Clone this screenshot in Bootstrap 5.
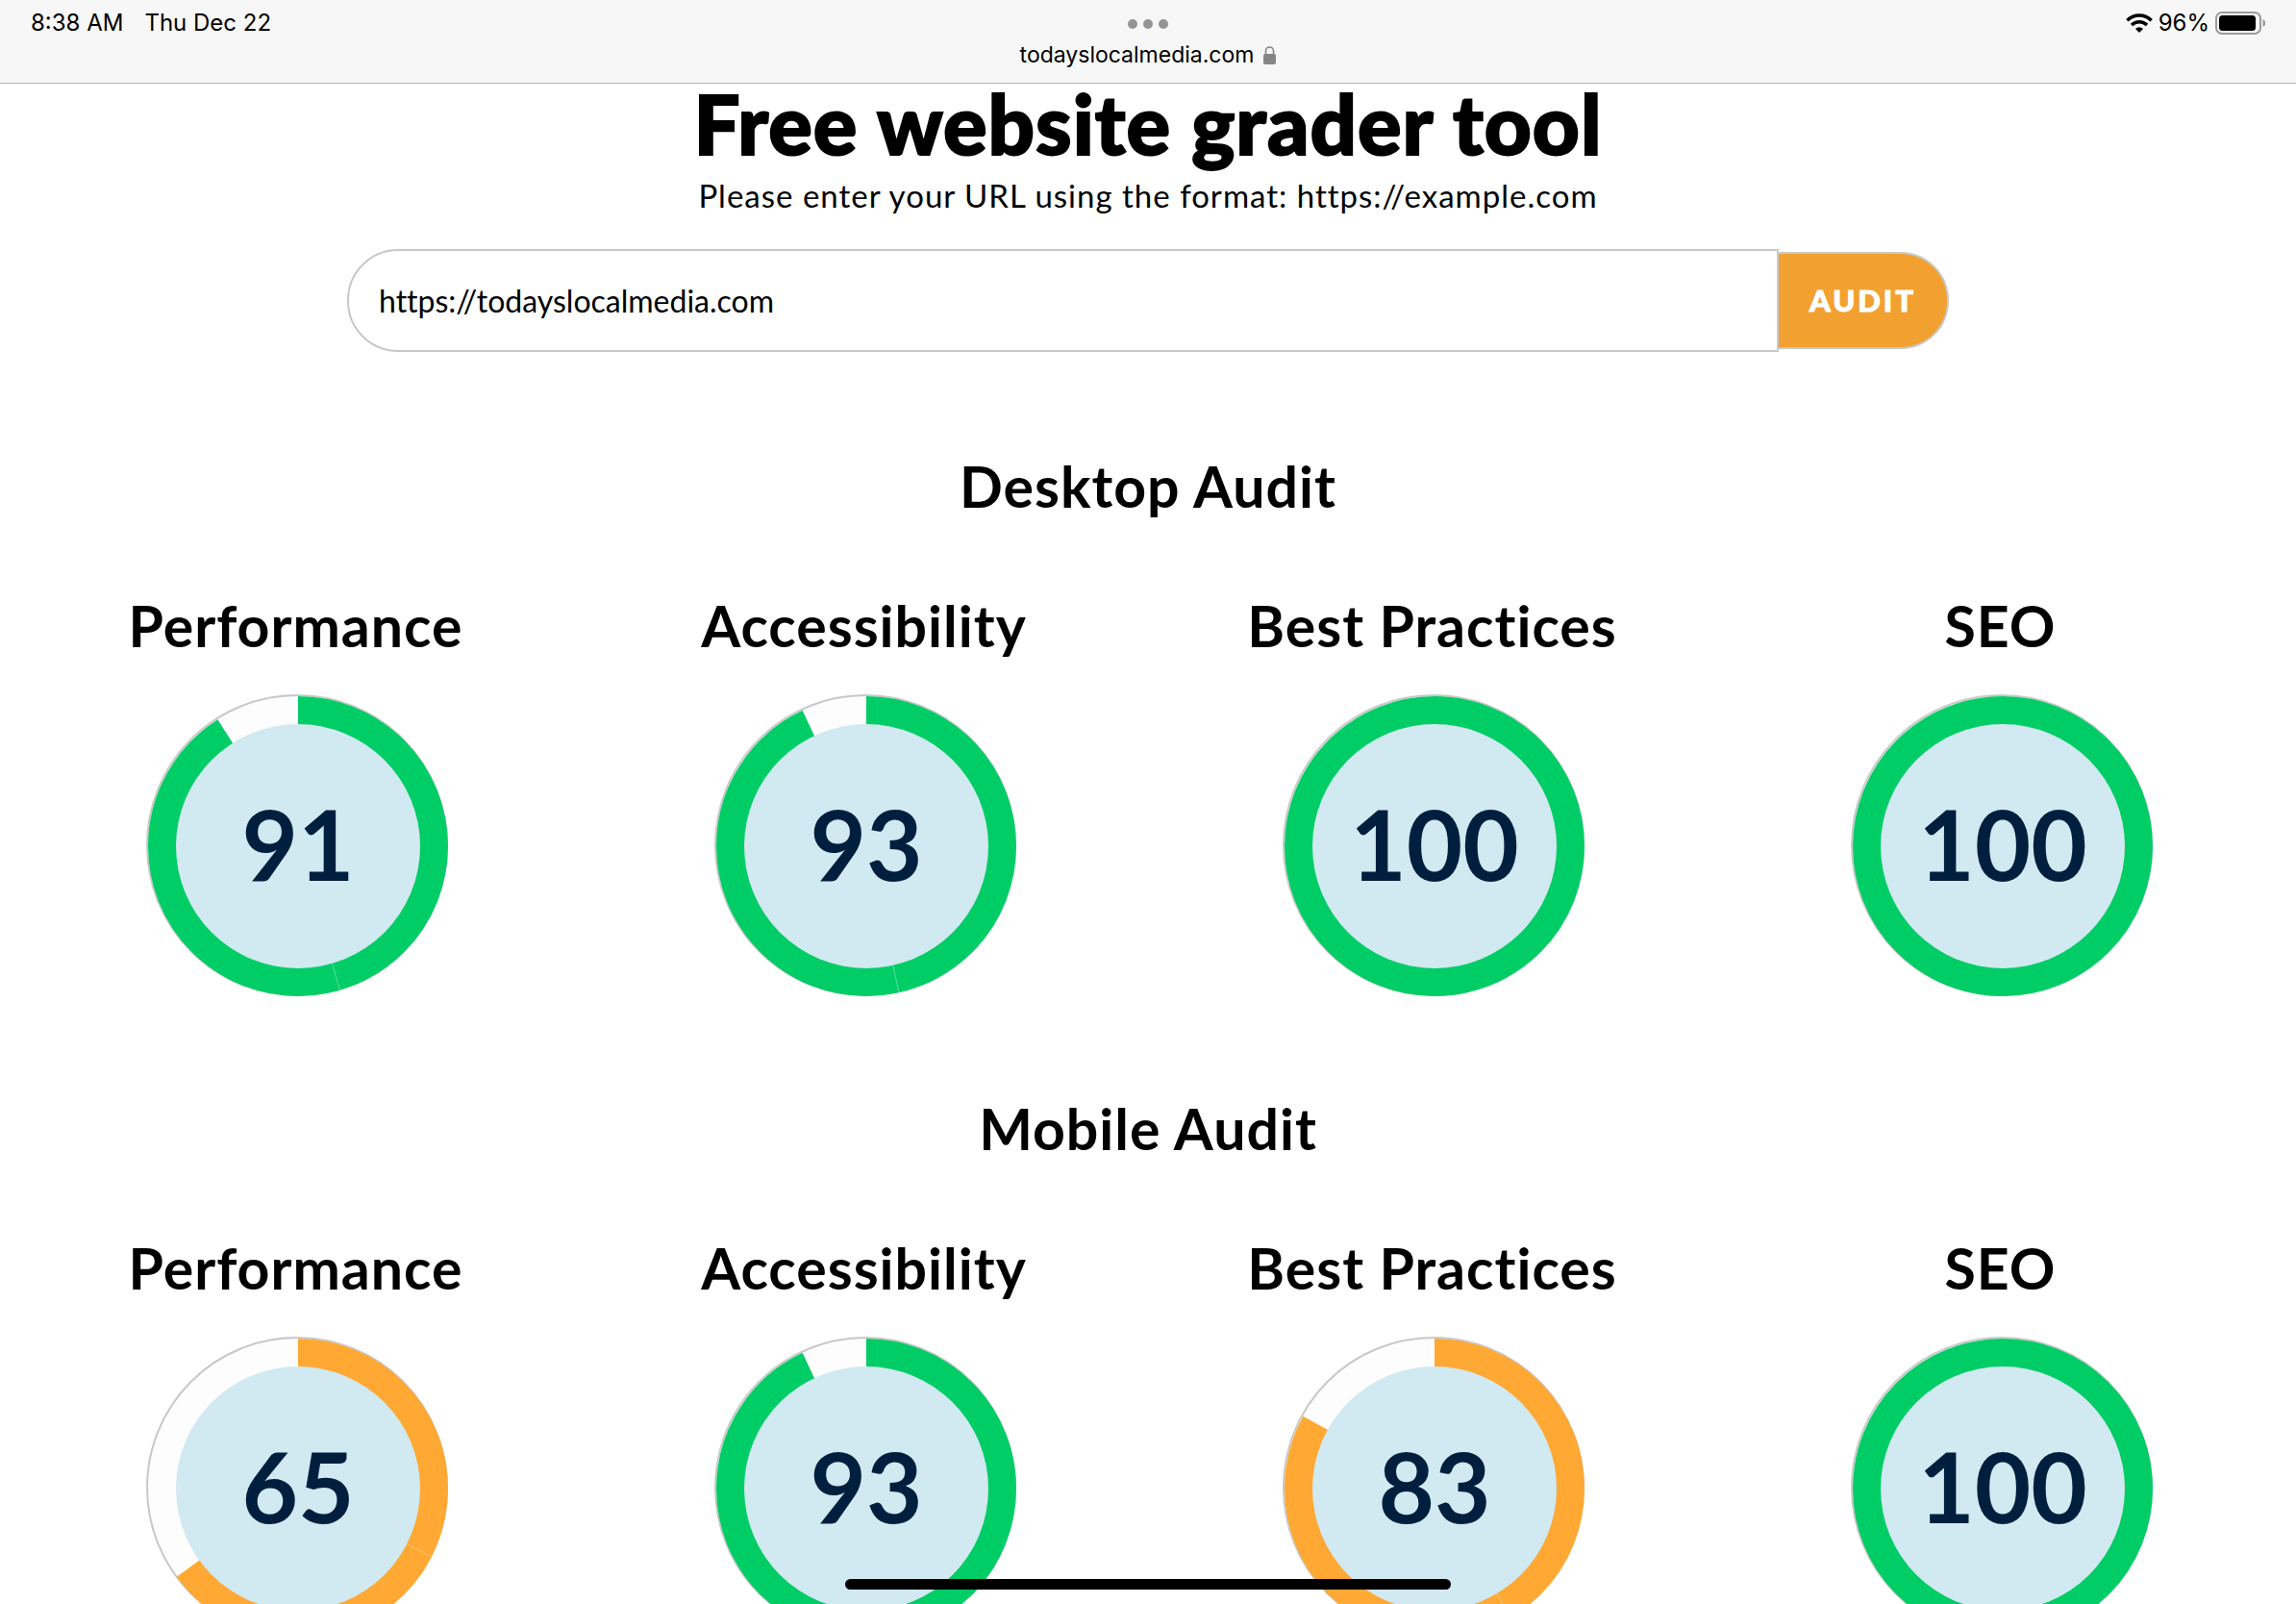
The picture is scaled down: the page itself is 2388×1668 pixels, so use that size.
<!DOCTYPE html>
<html lang="en">
<head>
<meta charset="utf-8">
<meta name="viewport" content="width=device-width, initial-scale=1">
<title>Free website grader tool</title>
<link rel="stylesheet" href="https://cdn.jsdelivr.net/npm/bootstrap@5.3.0/dist/css/bootstrap.min.css">
<style>
  html { scrollbar-width: none; }
  body { font-family: Lato, "Open Sans", sans-serif; color: #000; background: #fff; }
  h1, h2, h3, p { margin: 0; }
  .browser-bar { background: #f7f7f7; border-bottom: 1px solid #b0b0b0; font-family: Inter, Roboto, sans-serif; font-size: 24px; line-height: 28px; padding: 10px 32px 0; height: 87px; }
  .bar-side { flex: 1 1 0; }
  .bar-left { gap: 22px; }
  .bar-right { gap: 6px; }
  .bar-side svg, .site-url svg { display: block; }
  .dots { height: 30px; }
  .dots svg { display: block; }
  .site-url { color: #000; gap: 10px; font-size: 23px; line-height: 34px; }
  .page-title { font-size: 85px; line-height: 82px; font-weight: 900; letter-spacing: 1px; -webkit-text-stroke: 2px #000; }
  .hint { font-size: 33px; line-height: 40px; letter-spacing: 1px; margin-top: 14px; }
  .grader { max-width: 1666px; margin-top: 36px; }
  .url-box { height: 107px; border: 2px solid #c8c8c8; border-radius: 53px 0 0 53px; font-size: 32px; padding: 0 31px; color: #000; font-variant-ligatures: none; }
  .url-box:focus { box-shadow: none; }
  .audit-btn { height: 101px; border: 2px solid #c8c8c8; border-left: 0; border-radius: 0 50px 50px 0; background: #f2a130; color: #fff; font-size: 31px; font-weight: 900; letter-spacing: 3px; padding: 0 32px; -webkit-text-stroke: 1px #fff; }
  .report { padding: 0 12px; }
  .report-desktop { margin-top: 104px; }
  .report-mobile { margin-top: 100px; }
  .report-title, .metric { font-size: 59px; line-height: 72px; font-weight: 700; letter-spacing: 1px; }
  .report-title { margin-bottom: 73px; }
  .metric { margin-bottom: 35px; }
  .gauge { display: block; margin: 0 auto; width: 320px; height: 316px; }
  .rim { fill: #fdfdfd; stroke: #c8c8c8; stroke-width: 2; }
  .ring { fill: none; stroke-width: 30; stroke: #00cd66; }
  .fair .ring { stroke: #ffa833; }
  .core { fill: #d1e9f1; }
  .seam { stroke: #fff; stroke-opacity: .35; stroke-width: 1; }
  .score { font-size: 101px; font-weight: 700; fill: #001f3e; text-anchor: middle; }
  .home-bar { width: 630px; height: 11px; margin-bottom: 15px; background: #000; z-index: 1030; }
</style>
<script src="https://cdn.jsdelivr.net/npm/bootstrap@5.3.0/dist/js/bootstrap.bundle.min.js"></script>
</head>
<body>
<header class="browser-bar sticky-top d-flex align-items-start">
  <div class="bar-side bar-left d-flex"><span>8:38 AM</span><span>Thu Dec 22</span></div>
  <div class="d-flex flex-column align-items-center">
    <div class="dots"><svg width="42" height="30"><g fill="#949494"><circle cx="5" cy="15" r="5"/><circle cx="21" cy="15" r="5"/><circle cx="37" cy="15" r="5"/></g></svg></div>
    <a class="site-url d-flex align-items-center text-decoration-none" href="#">todayslocalmedia.com
      <svg width="13" height="19" viewBox="0 0 13 19"><rect y="8" width="13" height="11" rx="2" fill="#868686"/><path d="M2.500 9V5a4 4 0 0 1 8 0v4" fill="none" stroke="#868686" stroke-width="1.600"/></svg></a>
  </div>
  <div class="bar-side bar-right d-flex justify-content-end align-items-center">
    <svg width="28" height="20" viewBox="0 0 28 20"><g fill="none" stroke="#000" stroke-width="3.400"><path d="M1.300 7.200a18 18 0 0 1 25.400 0"/><path d="M6 12a11.300 11.300 0 0 1 16 0"/></g><path d="M14 20l-4-4a5.700 5.700 0 0 1 8 0z"/></svg>
    <span>96%</span>
    <svg width="52" height="24" viewBox="0 0 52 24"><rect x="1" y="1" width="46" height="22" rx="6" fill="none" stroke="#9b9b9b" stroke-width="2"/><rect x="4" y="4" width="38" height="16" rx="3.500"/><path d="M49.500 8q3 1.500 3 4t-3 4z" fill="#9b9b9b"/></svg>
  </div>
</header>

<main>
  <h1 class="page-title text-center">Free website grader tool</h1>
  <p class="hint text-center"><label for="site">Please enter your URL using the format: https://example.com</label></p>
  <form class="grader d-flex align-items-center mx-auto">
    <input id="site" class="url-box form-control" type="text" value="https://todayslocalmedia.com">
    <button class="audit-btn" type="button">AUDIT</button>
  </form>

  <section class="report report-desktop">
    <h2 class="report-title text-center">Desktop Audit</h2>
    <div class="row g-0 text-center">
      <div class="col-3"><h3 class="metric">Performance</h3>
        <svg class="gauge" viewBox="0 0 320 316"><circle class="rim" cx="161" cy="157" r="156"/><circle class="ring" cx="162" cy="158" r="141" pathLength="100" stroke-dasharray="91 100" transform="rotate(-90 162 158)"/><path class="seam" d="M162 31V2" transform="rotate(163.800 162 158)"/><circle class="core" cx="162" cy="158" r="127"/><text class="score" x="162" y="194">91</text></svg></div>
      <div class="col-3"><h3 class="metric">Accessibility</h3>
        <svg class="gauge" viewBox="0 0 320 316"><circle class="rim" cx="161" cy="157" r="156"/><circle class="ring" cx="162" cy="158" r="141" pathLength="100" stroke-dasharray="93 100" transform="rotate(-90 162 158)"/><path class="seam" d="M162 31V2" transform="rotate(167.400 162 158)"/><circle class="core" cx="162" cy="158" r="127"/><text class="score" x="162" y="194">93</text></svg></div>
      <div class="col-3"><h3 class="metric">Best Practices</h3>
        <svg class="gauge" viewBox="0 0 320 316"><circle class="rim" cx="161" cy="157" r="156"/><circle class="ring" cx="162" cy="158" r="141"/><circle class="core" cx="162" cy="158" r="127"/><text class="score" x="162" y="194">100</text></svg></div>
      <div class="col-3"><h3 class="metric">SEO</h3>
        <svg class="gauge" viewBox="0 0 320 316"><circle class="rim" cx="161" cy="157" r="156"/><circle class="ring" cx="162" cy="158" r="141"/><circle class="core" cx="162" cy="158" r="127"/><text class="score" x="162" y="194">100</text></svg></div>
    </div>
  </section>

  <section class="report report-mobile">
    <h2 class="report-title text-center">Mobile Audit</h2>
    <div class="row g-0 text-center">
      <div class="col-3 fair"><h3 class="metric">Performance</h3>
        <svg class="gauge" viewBox="0 0 320 316"><circle class="rim" cx="161" cy="157" r="156"/><circle class="ring" cx="162" cy="158" r="141" pathLength="100" stroke-dasharray="65 100" transform="rotate(-90 162 158)"/><path class="seam" d="M162 31V2" transform="rotate(117 162 158)"/><circle class="core" cx="162" cy="158" r="127"/><text class="score" x="162" y="194">65</text></svg></div>
      <div class="col-3"><h3 class="metric">Accessibility</h3>
        <svg class="gauge" viewBox="0 0 320 316"><circle class="rim" cx="161" cy="157" r="156"/><circle class="ring" cx="162" cy="158" r="141" pathLength="100" stroke-dasharray="93 100" transform="rotate(-90 162 158)"/><path class="seam" d="M162 31V2" transform="rotate(167.400 162 158)"/><circle class="core" cx="162" cy="158" r="127"/><text class="score" x="162" y="194">93</text></svg></div>
      <div class="col-3 fair"><h3 class="metric">Best Practices</h3>
        <svg class="gauge" viewBox="0 0 320 316"><circle class="rim" cx="161" cy="157" r="156"/><circle class="ring" cx="162" cy="158" r="141" pathLength="100" stroke-dasharray="83 100" transform="rotate(-90 162 158)"/><path class="seam" d="M162 31V2" transform="rotate(149.400 162 158)"/><circle class="core" cx="162" cy="158" r="127"/><text class="score" x="162" y="194">83</text></svg></div>
      <div class="col-3"><h3 class="metric">SEO</h3>
        <svg class="gauge" viewBox="0 0 320 316"><circle class="rim" cx="161" cy="157" r="156"/><circle class="ring" cx="162" cy="158" r="141"/><circle class="core" cx="162" cy="158" r="127"/><text class="score" x="162" y="194">100</text></svg></div>
    </div>
  </section>
</main>
<div class="home-bar position-fixed bottom-0 start-50 translate-middle-x rounded-pill"></div>
</body>
</html>
